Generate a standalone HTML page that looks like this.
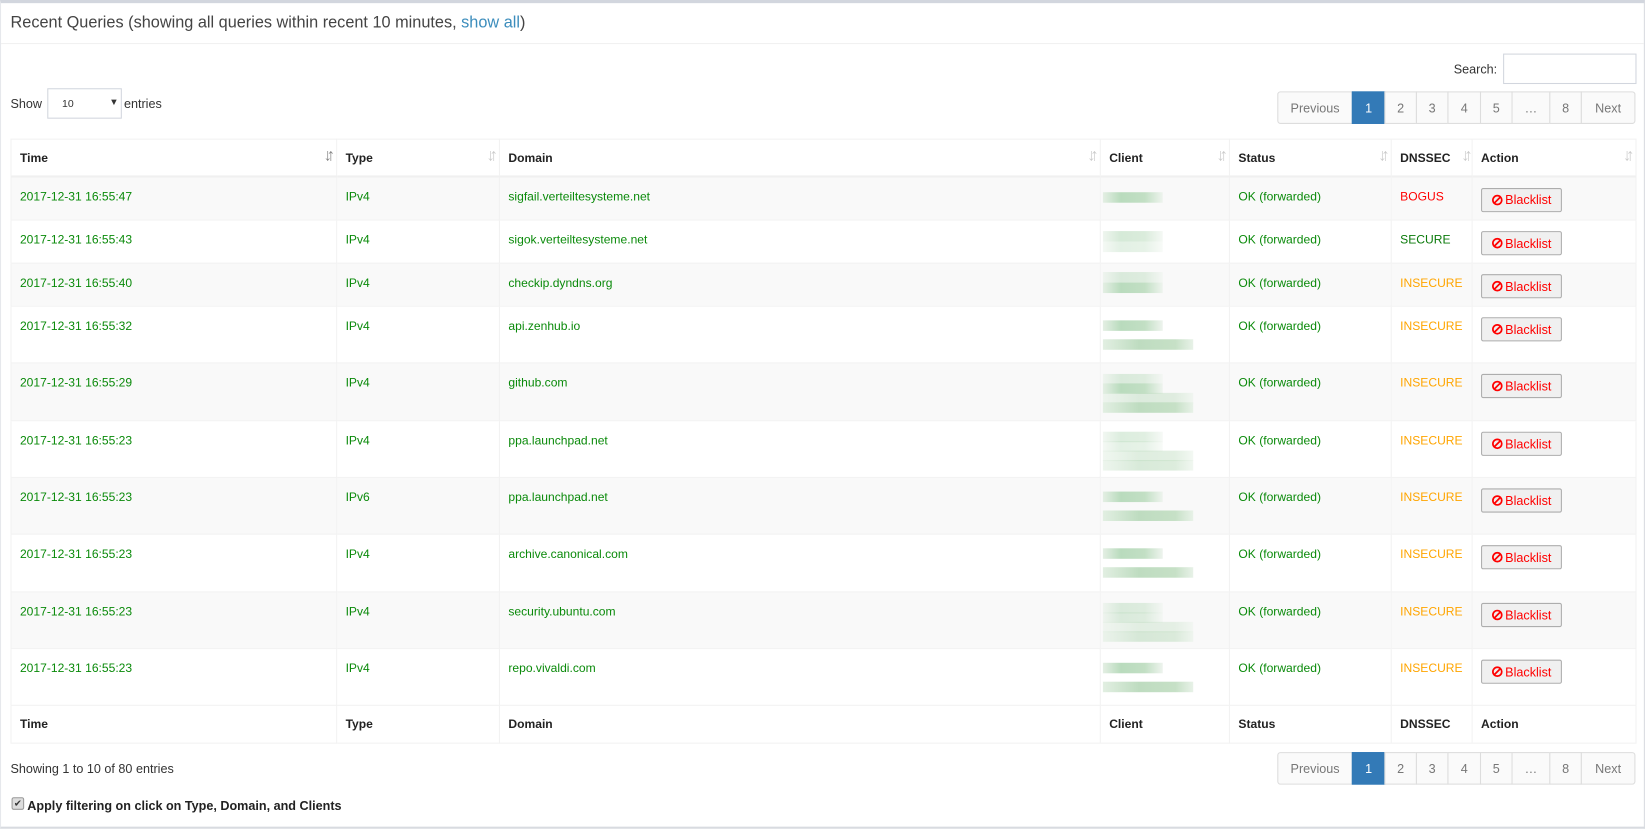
<!DOCTYPE html>
<html><head><meta charset="utf-8"><style>
html,body{margin:0;padding:0;background:#ecf0f5;}
body{width:1647px;height:832px;overflow:hidden;background:#fff;}
#w{width:1568px;height:792px;transform:scale(1.05038);transform-origin:0 0;position:relative;font-family:"Liberation Sans",sans-serif;color:#333;font-size:12px;}
.box{position:absolute;left:0;top:0;width:1566px;height:789px;border-top:3px solid #d2d6de;border-left:1px solid #e6e8ec;border-right:1px solid #d8dbe0;border-bottom:2px solid #d8dbe0;box-sizing:border-box;background:#fff;}
.title{position:absolute;left:10px;top:13px;font-size:15.5px;color:#444;}
.title a{color:#3c8dbc;text-decoration:none;}
.hline{position:absolute;left:1px;top:41px;width:1564px;height:1px;background:#f0f0f0;}
.abs{position:absolute;}
.inp{border:1px solid #d2d6de;background:#fff;}
.pag{position:absolute;left:1216px;height:31px;display:flex;}
.pag div{border:1px solid #ddd;margin-left:-1px;background:#fafafa;color:#777;font-size:12px;display:flex;align-items:center;justify-content:center;box-sizing:border-box;height:31px;}
.pag .a{background:#337ab7;border-color:#337ab7;color:#fff;}
table{position:absolute;left:10px;top:132px;width:1547px;border-collapse:collapse;table-layout:fixed;border:1px solid #f0f0f0;}
td,th{border:1px solid #f2f2f2;padding:13px 8px 0;vertical-align:top;text-align:left;font-size:11.5px;box-sizing:border-box;position:relative;white-space:nowrap;}
th{font-weight:bold;color:#222;padding-top:12px;}
thead th{border-bottom:2px solid #f0f0f0;}
tbody tr:nth-child(odd){background:#f9f9f9;}
tbody td{color:#0a8a0a;}
.s{position:absolute;right:6px;top:7px;color:#ccc;font-size:16px;font-weight:bold;letter-spacing:-5px;}
.bog{color:#f00!important}.sec{color:#0a7a0a!important}.ins{color:#ffa500!important}
.btn{position:absolute;left:8px;top:10px;width:77px;height:23px;box-sizing:border-box;border:1px solid #adadad;background:#f0f0f0;border-radius:2px;color:#f00;font-size:12px;display:flex;align-items:center;justify-content:center;}
.btn svg{margin-right:2px}
.c1{position:absolute;left:2px;height:10px;width:57px;background:linear-gradient(90deg,#e4efe4,#b9dbbd 30%,#c2dfc4 70%,#eef4ee);}
.c2{position:absolute;left:2px;height:10px;width:86px;background:linear-gradient(90deg,#e2efe2,#bedcc0 40%,#c6e0c6 80%,#e8f2e8);}
</style></head><body><div id="w">
<div class="box"></div>
<div class="title">Recent Queries (showing all queries within recent 10 minutes, <a>show all</a>)</div>
<div class="hline"></div>
<div class="abs" style="left:1384px;top:59px;font-size:12px;">Search:</div>
<div class="abs inp" style="left:1431px;top:51px;width:125px;height:27px;"></div>
<div class="abs" style="left:10px;top:92px;font-size:12px;">Show</div>
<div class="abs inp" style="left:45px;top:84px;width:69px;height:27px;font-size:10px;"><span style="position:absolute;left:13px;top:9px">10</span><span style="position:absolute;left:58px;top:7px;font-size:9px">▼</span></div>
<div class="abs" style="left:118px;top:92px;font-size:12px;">entries</div>
<div class="pag" style="top:87px"><div style="width:72px;margin-left:0;border-radius:3px 0 0 3px">Previous</div><div class="a" style="width:32px">1</div><div style="width:31px">2</div><div style="width:31px">3</div><div style="width:32px">4</div><div style="width:31px">5</div><div style="width:37px">…</div><div style="width:31px">8</div><div style="width:52px;border-radius:0 3px 3px 0">Next</div></div>
<table>
<colgroup><col style="width:310px"><col style="width:155px"><col style="width:572px"><col style="width:123px"><col style="width:154px"><col style="width:77px"><col style="width:156px"></colgroup>
<thead><tr style="height:35px"><th>Time<span class="s" style="color:#888">↓↑</span></th><th>Type<span class="s">↓↑</span></th><th>Domain<span class="s">↓↑</span></th><th>Client<span class="s">↓↑</span></th><th>Status<span class="s">↓↑</span></th><th>DNSSEC<span class="s" style="right:4px">↓↑</span></th><th>Action<span class="s">↓↑</span></th></tr></thead>
<tbody>
<tr style="height:42px"><td>2017-12-31 16:55:47</td><td>IPv4</td><td>sigfail.verteiltesysteme.net</td><td><div class="c1" style="top:14px"></div></td><td>OK (forwarded)</td><td class="bog">BOGUS</td><td><div class="btn"><svg width="11" height="11" viewBox="0 0 12 12"><circle cx="6" cy="6" r="4.6" fill="none" stroke="#f00" stroke-width="1.8"/><line x1="2.8" y1="9.2" x2="9.2" y2="2.8" stroke="#f00" stroke-width="1.8"/></svg>Blacklist</div></td></tr>
<tr style="height:41px"><td>2017-12-31 16:55:43</td><td>IPv4</td><td>sigok.verteiltesysteme.net</td><td><div class="c1" style="top:10px;opacity:.6"></div><div class="c1" style="top:20px;opacity:.4"></div></td><td>OK (forwarded)</td><td class="sec">SECURE</td><td><div class="btn"><svg width="11" height="11" viewBox="0 0 12 12"><circle cx="6" cy="6" r="4.6" fill="none" stroke="#f00" stroke-width="1.8"/><line x1="2.8" y1="9.2" x2="9.2" y2="2.8" stroke="#f00" stroke-width="1.8"/></svg>Blacklist</div></td></tr>
<tr style="height:41px"><td>2017-12-31 16:55:40</td><td>IPv4</td><td>checkip.dyndns.org</td><td><div class="c1" style="top:8px;opacity:.5"></div><div class="c1" style="top:18px"></div></td><td>OK (forwarded)</td><td class="ins">INSECURE</td><td><div class="btn"><svg width="11" height="11" viewBox="0 0 12 12"><circle cx="6" cy="6" r="4.6" fill="none" stroke="#f00" stroke-width="1.8"/><line x1="2.8" y1="9.2" x2="9.2" y2="2.8" stroke="#f00" stroke-width="1.8"/></svg>Blacklist</div></td></tr>
<tr style="height:54px"><td>2017-12-31 16:55:32</td><td>IPv4</td><td>api.zenhub.io</td><td><div class="c1" style="top:13px"></div><div class="c2" style="top:31px"></div></td><td>OK (forwarded)</td><td class="ins">INSECURE</td><td><div class="btn"><svg width="11" height="11" viewBox="0 0 12 12"><circle cx="6" cy="6" r="4.6" fill="none" stroke="#f00" stroke-width="1.8"/><line x1="2.8" y1="9.2" x2="9.2" y2="2.8" stroke="#f00" stroke-width="1.8"/></svg>Blacklist</div></td></tr>
<tr style="height:55px"><td>2017-12-31 16:55:29</td><td>IPv4</td><td>github.com</td><td><div class="c1" style="top:10px;opacity:.5"></div><div class="c1" style="top:19px"></div><div class="c2" style="top:28px;opacity:.5"></div><div class="c2" style="top:37px"></div></td><td>OK (forwarded)</td><td class="ins">INSECURE</td><td><div class="btn"><svg width="11" height="11" viewBox="0 0 12 12"><circle cx="6" cy="6" r="4.6" fill="none" stroke="#f00" stroke-width="1.8"/><line x1="2.8" y1="9.2" x2="9.2" y2="2.8" stroke="#f00" stroke-width="1.8"/></svg>Blacklist</div></td></tr>
<tr style="height:54px"><td>2017-12-31 16:55:23</td><td>IPv4</td><td>ppa.launchpad.net</td><td><div class="c1" style="top:10px;opacity:.5"></div><div class="c1" style="top:19px;opacity:.4"></div><div class="c2" style="top:28px;opacity:.5"></div><div class="c2" style="top:37px;opacity:.6"></div></td><td>OK (forwarded)</td><td class="ins">INSECURE</td><td><div class="btn"><svg width="11" height="11" viewBox="0 0 12 12"><circle cx="6" cy="6" r="4.6" fill="none" stroke="#f00" stroke-width="1.8"/><line x1="2.8" y1="9.2" x2="9.2" y2="2.8" stroke="#f00" stroke-width="1.8"/></svg>Blacklist</div></td></tr>
<tr style="height:54px"><td>2017-12-31 16:55:23</td><td>IPv6</td><td>ppa.launchpad.net</td><td><div class="c1" style="top:13px"></div><div class="c2" style="top:31px"></div></td><td>OK (forwarded)</td><td class="ins">INSECURE</td><td><div class="btn"><svg width="11" height="11" viewBox="0 0 12 12"><circle cx="6" cy="6" r="4.6" fill="none" stroke="#f00" stroke-width="1.8"/><line x1="2.8" y1="9.2" x2="9.2" y2="2.8" stroke="#f00" stroke-width="1.8"/></svg>Blacklist</div></td></tr>
<tr style="height:55px"><td>2017-12-31 16:55:23</td><td>IPv4</td><td>archive.canonical.com</td><td><div class="c1" style="top:13px"></div><div class="c2" style="top:31px"></div></td><td>OK (forwarded)</td><td class="ins">INSECURE</td><td><div class="btn"><svg width="11" height="11" viewBox="0 0 12 12"><circle cx="6" cy="6" r="4.6" fill="none" stroke="#f00" stroke-width="1.8"/><line x1="2.8" y1="9.2" x2="9.2" y2="2.8" stroke="#f00" stroke-width="1.8"/></svg>Blacklist</div></td></tr>
<tr style="height:54px"><td>2017-12-31 16:55:23</td><td>IPv4</td><td>security.ubuntu.com</td><td><div class="c1" style="top:10px;opacity:.5"></div><div class="c1" style="top:19px;opacity:.5"></div><div class="c2" style="top:28px;opacity:.4"></div><div class="c2" style="top:37px;opacity:.6"></div></td><td>OK (forwarded)</td><td class="ins">INSECURE</td><td><div class="btn"><svg width="11" height="11" viewBox="0 0 12 12"><circle cx="6" cy="6" r="4.6" fill="none" stroke="#f00" stroke-width="1.8"/><line x1="2.8" y1="9.2" x2="9.2" y2="2.8" stroke="#f00" stroke-width="1.8"/></svg>Blacklist</div></td></tr>
<tr style="height:54px"><td>2017-12-31 16:55:23</td><td>IPv4</td><td>repo.vivaldi.com</td><td><div class="c1" style="top:13px"></div><div class="c2" style="top:31px"></div></td><td>OK (forwarded)</td><td class="ins">INSECURE</td><td><div class="btn"><svg width="11" height="11" viewBox="0 0 12 12"><circle cx="6" cy="6" r="4.6" fill="none" stroke="#f00" stroke-width="1.8"/><line x1="2.8" y1="9.2" x2="9.2" y2="2.8" stroke="#f00" stroke-width="1.8"/></svg>Blacklist</div></td></tr>
</tbody>
<tfoot><tr style="height:36px"><th>Time</th><th>Type</th><th>Domain</th><th>Client</th><th>Status</th><th>DNSSEC</th><th>Action</th></tr></tfoot>
</table>
<div class="abs" style="left:10px;top:725px;font-size:12px;">Showing 1 to 10 of 80 entries</div>
<div class="pag" style="top:716px"><div style="width:72px;margin-left:0;border-radius:3px 0 0 3px">Previous</div><div class="a" style="width:32px">1</div><div style="width:31px">2</div><div style="width:31px">3</div><div style="width:32px">4</div><div style="width:31px">5</div><div style="width:37px">…</div><div style="width:31px">8</div><div style="width:52px;border-radius:0 3px 3px 0">Next</div></div>
<div class="abs" style="left:11px;top:759px;width:10px;height:10px;border:1px solid #999;border-radius:2px;background:#ddd;font-size:9px;line-height:10px;text-align:center;color:#333">✔</div>
<div class="abs" style="left:26px;top:760px;font-size:12px;font-weight:bold;color:#222">Apply filtering on click on Type, Domain, and Clients</div>
</div></body></html>
